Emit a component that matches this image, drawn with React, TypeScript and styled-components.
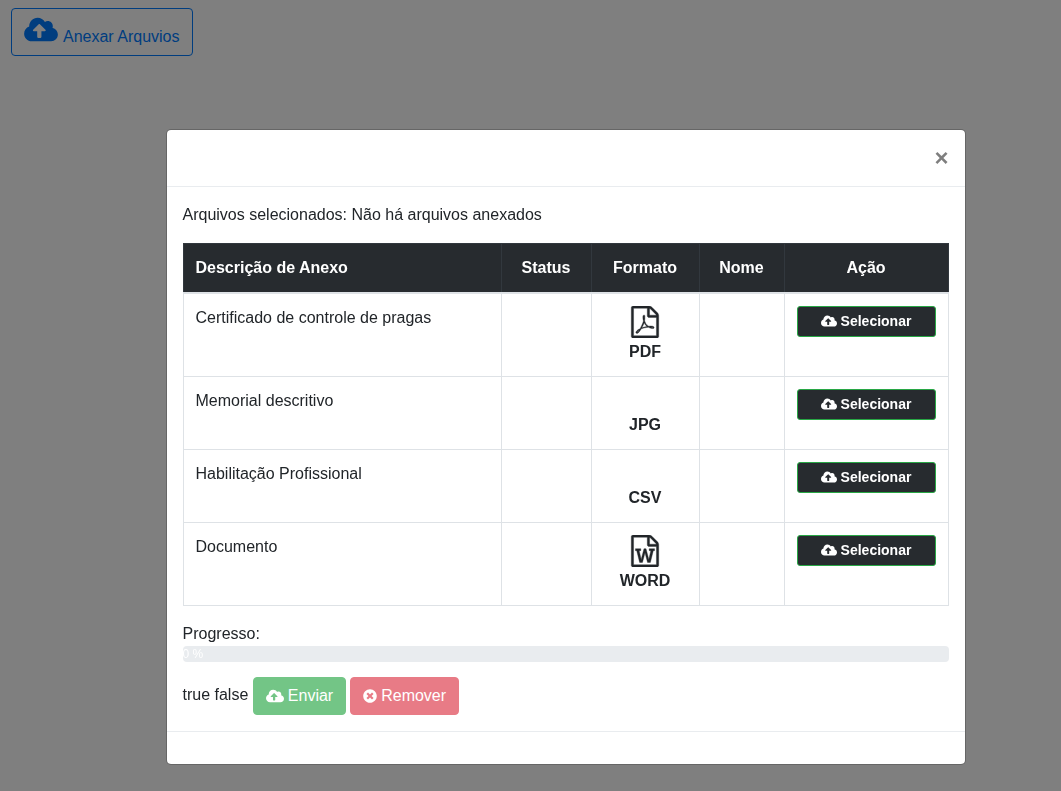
import * as React from 'react';
import styled, { createGlobalStyle } from 'styled-components';
import { FaCloudUploadAlt, FaTimesCircle } from 'react-icons/fa';

const FILE_PDF =
  'M1596 380q28 28 48 76t20 88v1152q0 40-28 68t-68 28h-1344q-40 0-68-28t-28-68v-1600q0-40 28-68t68-28h896q40 0 88 20t76 48zm-444-244v376h376q-10-29-22-41l-313-313q-12-12-41-22zm384 1528v-1024h-416q-40 0-68-28t-28-68v-416h-768v1536h1280zm-514-593q33 26 84 56 59-7 117-7 147 0 177 49 16 22 2 52 0 1-1 2l-2 2v1q-6 38-71 38-48 0-115-20t-130-53q-221 24-392 83-153 262-242 262-15 0-28-7l-24-12q-1-1-6-5-10-10-6-36 9-40 56-91.500t132-96.500q14-9 23 6 2 2 2 4 52-85 107-197 68-136 104-262-24-82-30.500-159.500t6.500-127.500q11-40 42-40h22q23 0 35 15 18 21 9 68-2 6-4 8 1 3 1 8v30q-2 123-14 192 55 164 146 238zm-576 411q52-24 137-158-51 40-87.500 84t-49.500 74zm398-920q-15 42-2 132 1-7 7-44 0-3 7-43 1-4 4-8-1-1-1-2-1-2-1-3-1-22-13-36 0 1-1 2v2zm-124 661q135-54 284-81-2-1-13-9.500t-16-13.500q-76-67-127-176-27 86-83 197-30 56-45 83zm646-16q-24-24-140-24 76 28 124 28 14 0 18-1 0-1-2-3z';
const FILE_WORD =
  'M1596 380q28 28 48 76t20 88v1152q0 40-28 68t-68 28h-1344q-40 0-68-28t-28-68v-1600q0-40 28-68t68-28h896q40 0 88 20t76 48zm-444-244v376h376q-10-29-22-41l-313-313q-12-12-41-22zm384 1528v-1024h-416q-40 0-68-28t-28-68v-416h-768v1536h1280zm-1175-896v107h70l164 661h159l128-485q7-20 10-46 2-16 2-24h4l3 24q1 3 3.500 20t5.500 26l128 485h159l164-661h70v-107h-300v107h90l-99 438q-5 20-7 46l-2 21h-4q0-3-.5-6.500t-1.500-8-1-6.500q-1-5-4-21t-5-25l-144-545h-114l-144 545q-2 9-4.500 24.500t-3.500 21.500l-4 21h-4l-2-21q-2-26-7-46l-99-438h90v-107h-300z';

const rows = [
  { name: 'Certificado de controle de pragas', format: 'PDF', icon: FILE_PDF },
  { name: 'Memorial descritivo', format: 'JPG' },
  { name: 'Habilitação Profissional', format: 'CSV' },
  { name: 'Documento', format: 'WORD', icon: FILE_WORD }
];

export default function App(): React.ReactElement {
  return (
    <>
      <GlobalStyle />
      <AttachButton>
        <AttachIcon />
        <span>Anexar Arquvios</span>
      </AttachButton>

      <Backdrop>
        <Modal>
          <ModalHeader>
            <CloseButton>×</CloseButton>
          </ModalHeader>
          <ModalBody>
            <Paragraph>Arquivos selecionados: Não há arquivos anexados</Paragraph>
            <Table>
              <thead>
                <tr>
                  <HeadCell $width={318} $left>Descrição de Anexo</HeadCell>
                  <HeadCell $width={90}>Status</HeadCell>
                  <HeadCell $width={108}>Formato</HeadCell>
                  <HeadCell $width={85}>Nome</HeadCell>
                  <HeadCell $width={164}>Ação</HeadCell>
                </tr>
              </thead>
              <tbody>
                {rows.map(row => (
                  <tr key={row.name}>
                    <Cell>{row.name}</Cell>
                    <Cell />
                    <FormatCell>
                      <FormatIconSlot $tall={!!row.icon}>
                        {row.icon && (
                          <svg
                            width="32"
                            height="32"
                            viewBox="0 0 1792 1792"
                            fill="#212529"
                            stroke="#212529"
                            strokeWidth="20"
                          >
                            <path d={row.icon} />
                          </svg>
                        )}
                      </FormatIconSlot>
                      {row.format}
                    </FormatCell>
                    <Cell />
                    <Cell>
                      <SelectButton>
                        <SelectIcon />
                        Selecionar
                      </SelectButton>
                    </Cell>
                  </tr>
                ))}
              </tbody>
            </Table>
            <ProgressLabel>Progresso:</ProgressLabel>
            <ProgressTrack>0 %</ProgressTrack>
            <Actions>
              <StateLabel>true false</StateLabel>
              <ActionButton $color="#28a745">
                <SendIcon />
                Enviar
              </ActionButton>
              <ActionButton $color="#dc3545">
                <RemoveIcon />
                Remover
              </ActionButton>
            </Actions>
          </ModalBody>
          <ModalFooter />
        </Modal>
      </Backdrop>
    </>
  );
}

const GlobalStyle = createGlobalStyle`
  body {
    margin: 0;
    padding: 8px 11px;
    background: #fff;
    color: #212529;
    font-family: "Liberation Sans", Arial, sans-serif;
    font-size: 16px;
    line-height: 24px;
  }
  * {
    box-sizing: border-box;
  }
`;

const AttachButton = styled.button`
  display: flex;
  align-items: flex-end;
  gap: 5px;
  width: 182px;
  height: 48px;
  padding: 0 12px 6px;
  background: transparent;
  border: 1px solid #007bff;
  border-radius: 4px;
  color: #007bff;
  font: inherit;
`;

const AttachIcon = styled(FaCloudUploadAlt)`
  width: 34px;
  height: 27px;
  margin-bottom: 6px;
  flex: none;
`;

const Backdrop = styled.div`
  position: fixed;
  inset: 0;
  padding: 129px 0 0 165.5px;
  background: rgba(0, 0, 0, 0.5);
`;

const Modal = styled.div`
  width: 800px;
  background: #fff;
  border: 1px solid rgba(0, 0, 0, 0.2);
  border-radius: 5px;
  background-clip: padding-box;
`;

const ModalHeader = styled.div`
  display: flex;
  justify-content: flex-end;
  height: 57px;
  border-bottom: 1px solid #e9ecef;
`;

const CloseButton = styled.button`
  padding: 15px 16px 0;
  height: 40px;
  background: transparent;
  border: 0;
  color: #000;
  opacity: 0.5;
  font-family: inherit;
  font-size: 24px;
  font-weight: 700;
  line-height: 1;
  text-shadow: 0 1px 0 #fff;
`;

const ModalBody = styled.div`
  padding: 16px;
`;

const Paragraph = styled.p`
  margin: 0 0 16px;
`;

const Table = styled.table`
  width: calc(100% - 1px);
  margin-bottom: 16px;
  table-layout: fixed;
  border-collapse: collapse;
`;

const HeadCell = styled.th<{ $width: number; $left?: boolean }>`
  width: ${p => p.$width}px;
  padding: 12px;
  background: #272b2f;
  border: 1px solid #32383e;
  border-bottom: 2px solid #dee2e6;
  color: #fff;
  font-weight: 700;
  text-align: ${p => (p.$left ? 'left' : 'center')};
`;

const Cell = styled.td`
  padding: 12px;
  border: 1px solid #dee2e6;
  vertical-align: top;
`;

const FormatCell = styled(Cell)`
  font-weight: 700;
  text-align: center;
`;

const FormatIconSlot = styled.div<{ $tall: boolean }>`
  height: ${p => (p.$tall ? 34 : 24)}px;
`;

const SelectButton = styled.button`
  display: flex;
  align-items: center;
  justify-content: center;
  gap: 4px;
  width: 100%;
  height: 31px;
  padding: 0 8px;
  background: #272b2f;
  border: 1px solid #28a745;
  border-radius: 3px;
  color: #fff;
  font-family: inherit;
  font-size: 14px;
  font-weight: 700;
  line-height: 21px;
`;

const SelectIcon = styled(FaCloudUploadAlt)`
  width: 16px;
  height: 14px;
  margin-bottom: 2px;
`;

const ProgressLabel = styled.div``;

const ProgressTrack = styled.div`
  height: 16px;
  margin-bottom: 15px;
  background: #e9ecef;
  border-radius: 4px;
  color: #fff;
  font-size: 12px;
  line-height: 16px;
`;

const Actions = styled.div`
  display: flex;
  align-items: flex-start;
  gap: 4px;
`;

const StateLabel = styled.span`
  padding-top: 6px;
  margin-right: 0.5px;
`;

const ActionButton = styled.button<{ $color: string }>`
  display: flex;
  align-items: center;
  gap: 4px;
  height: 38px;
  padding: 0 12px;
  background: ${p => p.$color};
  border: 1px solid ${p => p.$color};
  border-radius: 4px;
  color: #fff;
  font: inherit;
  opacity: 0.65;
`;

const SendIcon = styled(FaCloudUploadAlt)`
  width: 18px;
  height: 16px;
`;

const RemoveIcon = styled(FaTimesCircle)`
  width: 14px;
  height: 14px;
`;

const ModalFooter = styled.div`
  height: 33px;
  border-top: 1px solid #e9ecef;
`;
